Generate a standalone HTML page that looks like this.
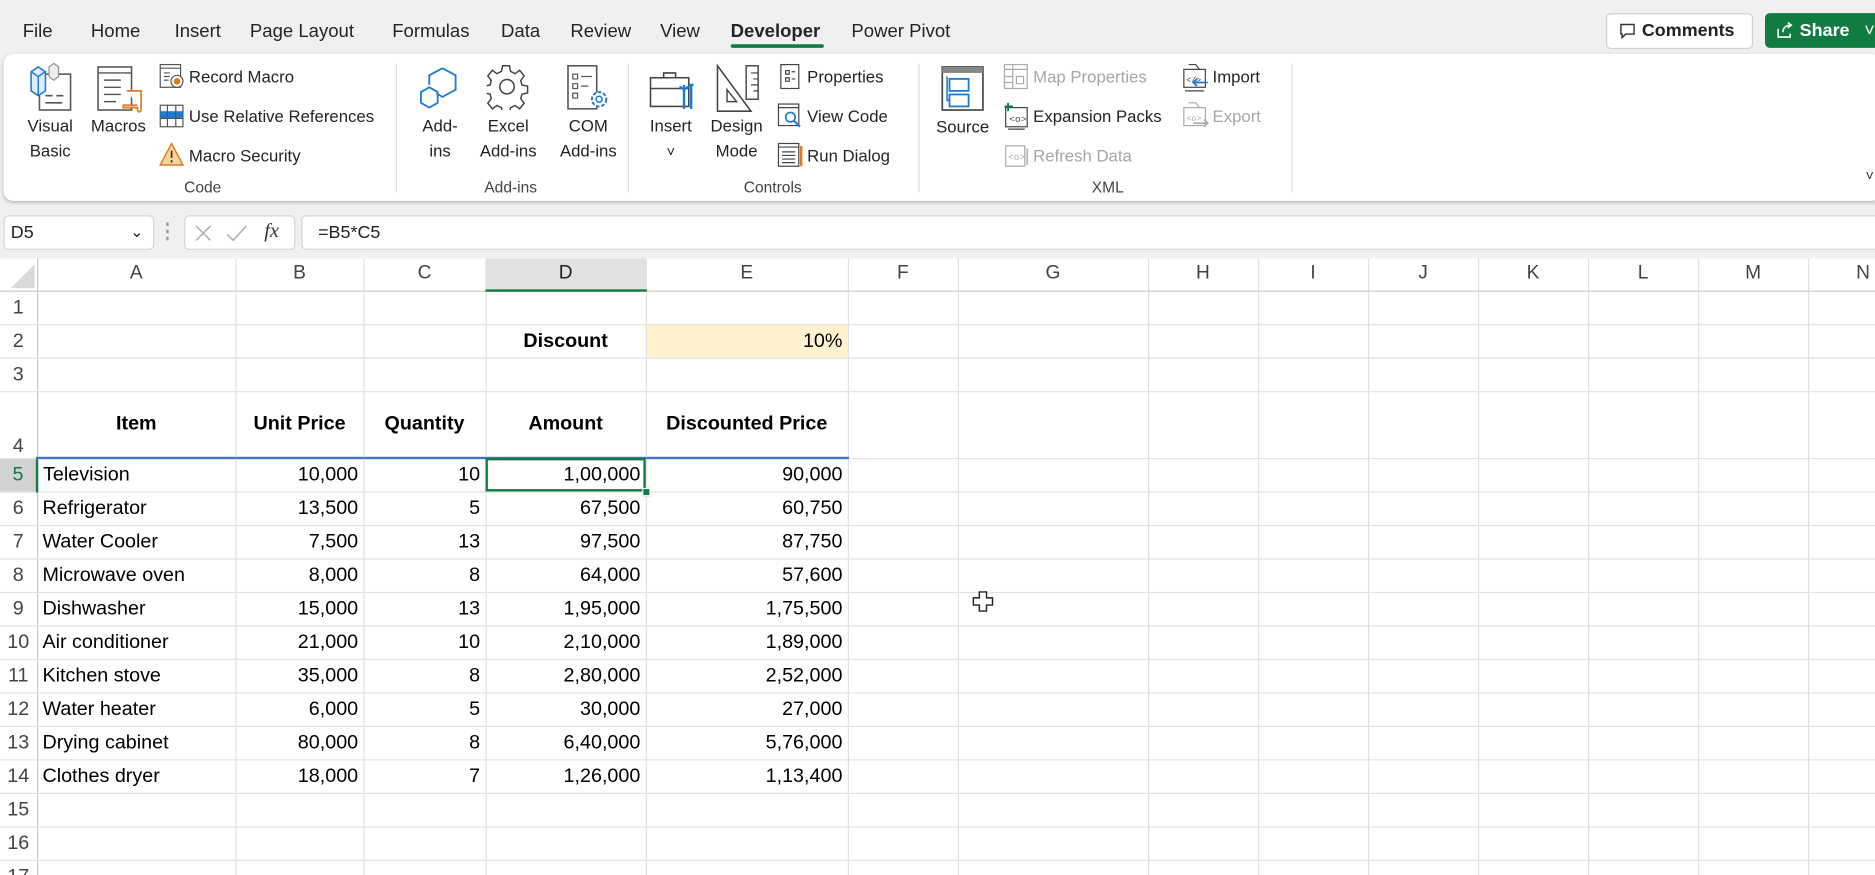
<!DOCTYPE html>
<html><head><meta charset="utf-8">
<style>
html,body{margin:0;padding:0;width:1875px;height:875px;overflow:hidden;background:#f0f0f0;}
#root{position:absolute;left:0;top:0;width:1568px;height:732px;transform:scale(1.19580);transform-origin:0 0;background:#f0f0f0;font-family:"Liberation Sans",sans-serif;color:#222;}
.abs{position:absolute;}
.tab{position:absolute;top:18px;font-size:15.5px;color:#242424;}
.rib{position:absolute;left:3px;top:45px;width:1570px;height:123px;background:#fff;border-radius:8px;box-shadow:0 1px 3px rgba(0,0,0,.25);}
.lbl{position:absolute;font-size:14px;color:#242424;text-align:center;line-height:21px;}
.sm{position:absolute;font-size:14px;color:#242424;white-space:nowrap;}
.gray{color:#a6a6a6;}
.glab{position:absolute;top:104px;font-size:13px;color:#444;}
.sep{position:absolute;top:8px;width:1px;height:108px;background:#dcdcdc;}
#grid{position:absolute;left:0;top:216px;width:1568px;height:516px;background:#fff;overflow:hidden;}
table{border-collapse:collapse;table-layout:fixed;width:1604px;font-family:"Liberation Sans",sans-serif;font-size:16.5px;}
td{border-right:1px solid #e1e1e1;border-bottom:1px solid #e1e1e1;padding:0 4px;white-space:nowrap;overflow:visible;color:#000;}
td.rh{color:#444;text-align:center;padding:0;font-size:16.5px;border-right:1px solid #c8c8c8;}
tr.ch td{color:#444;text-align:center;font-size:16px;border-bottom:1px solid #c8c8c8;}
.r{text-align:right;}
.c{text-align:center;}
.b{font-weight:bold;}
</style></head><body><div id="root">

<div class="tab" style="left:19px">File</div>
<div class="tab" style="left:76px">Home</div>
<div class="tab" style="left:146px">Insert</div>
<div class="tab" style="left:209px">Page Layout</div>
<div class="tab" style="left:328px">Formulas</div>
<div class="tab" style="left:419px">Data</div>
<div class="tab" style="left:477px">Review</div>
<div class="tab" style="left:552px">View</div>
<div class="tab" style="left:611px;font-weight:bold">Developer</div>
<div class="abs" style="left:611px;top:37px;width:78px;height:3px;background:#107c41;border-radius:2px"></div>
<div class="tab" style="left:712px">Power Pivot</div>

<div class="abs" style="left:1343px;top:11px;width:121px;height:28px;background:#fff;border:1px solid #d0d0d0;border-radius:4px;font-size:15px;font-weight:bold;line-height:28px;">
<svg class="abs" style="left:10px;top:7px" width="14" height="14" viewBox="0 0 14 14"><path d="M1.5 1.5h11v8h-7l-3 3v-3h-1z" fill="none" stroke="#333" stroke-width="1.2"/></svg>
<span style="position:absolute;left:29px">Comments</span></div>
<div class="abs" style="left:1476px;top:11px;width:100px;height:29px;background:#107c41;border-radius:4px;color:#fff;font-size:15px;font-weight:bold;line-height:29px;">
<svg class="abs" style="left:9px;top:7px" width="15" height="15" viewBox="0 0 15 15"><path d="M2 6v7h10v-3M6 9c0-4 3-6 7-6M10 0.8l3 2.2-3 2.4" fill="none" stroke="#fff" stroke-width="1.3"/></svg>
<span style="position:absolute;left:29px">Share</span><span style="position:absolute;left:83px;font-weight:normal">˅</span></div>

<div class="rib">
 <svg class="abs" style="left:20px;top:7px" width="40" height="42" viewBox="0 0 40 42"><rect x="10" y="10" width="26" height="30" fill="#fff" stroke="#555" stroke-width="1.3"/><path d="M15 28h6M24 28h6M15 34h14" stroke="#555" stroke-width="1.3"/><path d="M3 8l6-4 6 4v16l-6 4-6-4z" fill="#dceefb" stroke="#1e7ad0" stroke-width="1.3"/><path d="M3 8l6 4 6-4M9 12v16" stroke="#1e7ad0" stroke-width="1.2" fill="none"/><path d="M18 4l4-3 4 3v8l-4 3-4-3z" fill="#eee" stroke="#999" stroke-width="1.1"/></svg>
 <div class="lbl" style="left:12px;top:50px;width:54px">Visual<br>Basic</div>
 <svg class="abs" style="left:77px;top:9px" width="42" height="42" viewBox="0 0 42 42"><rect x="2" y="2" width="28" height="36" fill="#fff" stroke="#555" stroke-width="1.3"/><path d="M2 7h28M7 13h14M7 19h14M7 25h14M7 31h10" stroke="#555" stroke-width="1.2"/><path d="M26 22h12v16c0 2-3 2-3 0v-2H23v-2h12" fill="#fff" stroke="#e07b24" stroke-width="1.4"/></svg>
 <div class="lbl" style="left:68px;top:50px;width:56px">Macros</div>
 <svg class="abs" style="left:130px;top:8px" width="22" height="22" viewBox="0 0 22 22"><rect x="1" y="1" width="17" height="19" fill="#fff" stroke="#555"/><path d="M1 4h17M4 8h5M4 11h5M4 14h4" stroke="#555"/><circle cx="15" cy="15" r="5" fill="#fff" stroke="#555"/><circle cx="15" cy="15" r="2.8" fill="#e07b24"/></svg>
 <div class="sm" style="left:155px;top:11px">Record Macro</div>
 <svg class="abs" style="left:130px;top:42px" width="21" height="20" viewBox="0 0 21 20"><rect x="1" y="1" width="19" height="18" fill="#fff" stroke="#555"/><rect x="1" y="6" width="19" height="6" fill="#1e7ad0"/><path d="M7 1v18M14 1v18M1 12h19" stroke="#555"/></svg>
 <div class="sm" style="left:155px;top:44px">Use Relative References</div>
 <svg class="abs" style="left:130px;top:74px" width="21" height="20" viewBox="0 0 21 20"><path d="M10.5 1L20 19H1z" fill="#fbd49a" stroke="#e07b24" stroke-width="1.2"/><path d="M10.5 7v6M10.5 15v2" stroke="#333" stroke-width="1.4"/></svg>
 <div class="sm" style="left:155px;top:77px">Macro Security</div>
 <div class="glab" style="left:151px">Code</div>
 <div class="sep" style="left:328px"></div>

 <svg class="abs" style="left:345px;top:10px" width="40" height="38" viewBox="0 0 40 38"><path d="M22 2l11 6v12l-11 6-5-3" fill="none" stroke="#1e7ad0" stroke-width="1.5"/><path d="M22 2l-11 6v8" fill="none" stroke="#1e7ad0" stroke-width="1.5"/><path d="M11 18l7 4v9l-7 4-7-4v-9z" fill="none" stroke="#1e7ad0" stroke-width="1.5"/></svg>
 <div class="lbl" style="left:340px;top:50px;width:50px">Add-<br>ins</div>
 <svg class="abs" style="left:404px;top:9px" width="36" height="38" viewBox="0 0 36 38"><path d="M15 2h6l1 5 4 2 4-3 4 5-3 4 1 4 5 1v6l-5 1-1 4 3 4-4 5-4-3-4 2-1 5h-6l-1-5-4-2-4 3-4-5 3-4-1-4-5-1v-6l5-1 1-4-3-4 4-5 4 3 4-2z" transform="scale(0.95) translate(-1 -1)" fill="#fff" stroke="#444" stroke-width="1.3"/><circle cx="17" cy="18.5" r="6" fill="none" stroke="#444" stroke-width="1.3"/></svg>
 <div class="lbl" style="left:392px;top:50px;width:60px">Excel<br>Add-ins</div>
 <svg class="abs" style="left:470px;top:9px" width="38" height="40" viewBox="0 0 38 40"><rect x="2" y="1" width="24" height="36" fill="#fff" stroke="#555" stroke-width="1.3"/><path d="M6 8h4v4H6zM6 16h4v4H6zM6 24h4v4H6zM13 10h9M13 18h6" stroke="#555" fill="none"/><circle cx="28" cy="29" r="6" fill="#fff" stroke="#1e7ad0" stroke-width="1.6" stroke-dasharray="3 1.5"/><circle cx="28" cy="29" r="2.5" fill="none" stroke="#1e7ad0" stroke-width="1.3"/></svg>
 <div class="lbl" style="left:458px;top:50px;width:62px">COM<br>Add-ins</div>
 <div class="glab" style="left:402px">Add-ins</div>
 <div class="sep" style="left:522px"></div>

 <svg class="abs" style="left:539px;top:12px" width="44" height="36" viewBox="0 0 44 36"><rect x="2" y="8" width="32" height="24" fill="#fff" stroke="#444" stroke-width="1.3"/><path d="M13 8V4h10v4M2 17h32" stroke="#444" stroke-width="1.3" fill="none"/><path d="M30 14v6M27 15c0 3 6 3 6 0M30 20v14M36 14v20M34 14h4" stroke="#1e7ad0" stroke-width="2" fill="none"/></svg>
 <div class="lbl" style="left:532px;top:50px;width:52px">Insert<br><span style="font-size:12px">˅</span></div>
 <svg class="abs" style="left:595px;top:8px" width="40" height="42" viewBox="0 0 40 42"><path d="M2 40V2l28 38z" fill="#fff" stroke="#444" stroke-width="1.3"/><path d="M10 32V22l8 10z" fill="none" stroke="#444" stroke-width="1.2"/><rect x="26" y="2" width="10" height="28" fill="#fff" stroke="#444" stroke-width="1.2"/><path d="M30 8h6M32 13h4M30 18h6M32 23h4" stroke="#444"/></svg>
 <div class="lbl" style="left:586px;top:50px;width:54px">Design<br>Mode</div>
 <svg class="abs" style="left:649px;top:8px" width="18" height="22" viewBox="0 0 18 22"><rect x="1" y="1" width="15" height="20" fill="#fff" stroke="#444"/><path d="M5 6h3v3H5zM5 12h3v3H5zM10 7h3M10 13h3" stroke="#444" fill="none"/></svg>
 <div class="sm" style="left:672px;top:11px">Properties</div>
 <svg class="abs" style="left:647px;top:41px" width="22" height="22" viewBox="0 0 22 22"><rect x="1" y="1" width="17" height="18" fill="#fff" stroke="#444"/><path d="M1 4h17" stroke="#444"/><circle cx="11" cy="12" r="4" fill="none" stroke="#1e7ad0" stroke-width="1.4"/><path d="M14 15l5 5" stroke="#1e7ad0" stroke-width="1.8"/></svg>
 <div class="sm" style="left:672px;top:44px">View Code</div>
 <svg class="abs" style="left:647px;top:74px" width="22" height="22" viewBox="0 0 22 22"><rect x="1" y="1" width="17" height="19" fill="#fff" stroke="#444"/><path d="M1 4h17M4 8h11M4 11h11M4 14h11M4 17h11" stroke="#444"/><path d="M20 3v17" stroke="#e07b24" stroke-width="2"/></svg>
 <div class="sm" style="left:672px;top:77px">Run Dialog</div>
 <div class="glab" style="left:619px">Controls</div>
 <div class="sep" style="left:765px"></div>

 <svg class="abs" style="left:783px;top:9px" width="38" height="40" viewBox="0 0 38 40"><rect x="2" y="2" width="34" height="36" fill="#fff" stroke="#444" stroke-width="1.4"/><rect x="2" y="2" width="34" height="5" fill="#888"/><rect x="8" y="12" width="16" height="10" fill="#fff" stroke="#1e7ad0" stroke-width="1.5"/><rect x="8" y="25" width="16" height="10" fill="#fff" stroke="#1e7ad0" stroke-width="1.5"/><path d="M6 10v20h2" stroke="#1e7ad0" stroke-width="1.3" fill="none"/></svg>
 <div class="lbl" style="left:775px;top:51px;width:54px">Source</div>
 <svg class="abs" style="left:836px;top:8px" width="22" height="22" viewBox="0 0 22 22"><rect x="1" y="1" width="19" height="20" fill="#fff" stroke="#aaa"/><path d="M1 5h19M8 1v20M1 11h7M1 16h7M11 11h6v6h-6z" stroke="#aaa" fill="none"/></svg>
 <div class="sm gray" style="left:861px;top:11px">Map Properties</div>
 <svg class="abs" style="left:836px;top:40px" width="22" height="24" viewBox="0 0 22 24"><rect x="2" y="5" width="18" height="16" fill="#fff" stroke="#444"/><path d="M4 1v7M1 4h7" stroke="#107c41" stroke-width="1.5"/><text x="5" y="17" font-size="8" font-family="Liberation Mono" fill="#444">&lt;o&gt;</text><path d="M4 23h14" stroke="#444"/></svg>
 <div class="sm" style="left:861px;top:44px">Expansion Packs</div>
 <svg class="abs" style="left:836px;top:73px" width="22" height="24" viewBox="0 0 22 24"><rect x="2" y="4" width="16" height="17" fill="#fff" stroke="#aaa"/><text x="4" y="16" font-size="8" font-family="Liberation Mono" fill="#aaa">&lt;o&gt;</text><path d="M20 6v14" stroke="#bbb" stroke-width="1.5"/></svg>
 <div class="sm gray" style="left:861px;top:77px">Refresh Data</div>
 <svg class="abs" style="left:985px;top:8px" width="24" height="24" viewBox="0 0 24 24"><rect x="2" y="5" width="18" height="15" fill="#fff" stroke="#444"/><path d="M6 1h6l3 4" stroke="#444" fill="none"/><text x="4" y="16" font-size="7" font-family="Liberation Mono" fill="#444">&lt;/&gt;</text><path d="M22 16h-12M13 13l-3 3 3 3" stroke="#1e7ad0" stroke-width="1.5" fill="none"/><path d="M3 23h16" stroke="#444"/></svg>
 <div class="sm" style="left:1011px;top:11px">Import</div>
 <svg class="abs" style="left:985px;top:40px" width="24" height="24" viewBox="0 0 24 24"><rect x="2" y="5" width="18" height="15" fill="#fff" stroke="#aaa"/><path d="M6 1h6l3 4" stroke="#aaa" fill="none"/><text x="4" y="16" font-size="7" font-family="Liberation Mono" fill="#aaa">&lt;o&gt;</text><path d="M10 18h12M19 15l3 3-3 3" stroke="#aaa" stroke-width="1.3" fill="none"/></svg>
 <div class="sm gray" style="left:1011px;top:44px">Export</div>
 <div class="glab" style="left:910px">XML</div>
 <div class="sep" style="left:1077px"></div>
 <div class="abs" style="left:1557px;top:95px;font-size:12px;color:#333">˅</div>
</div>

<div class="abs" style="left:3px;top:180px;width:124px;height:27px;background:#fff;border:1px solid #d6d6d6;border-radius:4px;font-size:15px;line-height:27px;"><span style="position:absolute;left:5px">D5</span><span style="position:absolute;left:105px;top:-1px;font-size:13px">&#8964;</span></div>
<div class="abs" style="left:139px;top:186px;width:2px;height:3px;background:#999;box-shadow:0 6px 0 #999,0 12px 0 #999"></div>
<div class="abs" style="left:154px;top:180px;width:91px;height:27px;background:#fff;border:1px solid #d6d6d6;border-radius:4px;">
<svg class="abs" style="left:7px;top:6px" width="16" height="16" viewBox="0 0 16 16"><path d="M2 2l12 12M14 2L2 14" stroke="#aaa" stroke-width="1.2"/></svg>
<svg class="abs" style="left:34px;top:6px" width="18" height="16" viewBox="0 0 18 16"><path d="M1 9l5 5L17 2" stroke="#aaa" stroke-width="1.2" fill="none"/></svg>
<span class="abs" style="left:66px;top:2px;font-family:'Liberation Serif',serif;font-style:italic;font-size:17px;color:#333">fx</span></div>
<div class="abs" style="left:252px;top:180px;width:1320px;height:27px;background:#fff;border:1px solid #d6d6d6;border-radius:4px;font-size:15px;line-height:27px;"><span style="position:absolute;left:13px">=B5*C5</span></div>

<div id="grid">
<table>
<colgroup><col style="width:31px"><col style="width:166px"><col style="width:107px"><col style="width:102px"><col style="width:134px"><col style="width:169px"><col style="width:92px"><col style="width:159px"><col style="width:92px"><col style="width:92px"><col style="width:92px"><col style="width:92px"><col style="width:92px"><col style="width:92px"><col style="width:92px"></colgroup>
<tr class="ch" style="height:27px"><td class="rh" style="position:relative"><svg style="position:absolute;right:2px;bottom:2px" width="20" height="20"><path d="M20 0V20H0z" fill="#dadada"/></svg></td><td>A</td><td>B</td><td>C</td><td style="background:#e1e1e1;border-bottom:2px solid #107c41;color:#222">D</td><td>E</td><td>F</td><td>G</td><td>H</td><td>I</td><td>J</td><td>K</td><td>L</td><td>M</td><td>N</td></tr>
<tr style="height:28px"><td class="rh">1</td><td></td><td></td><td></td><td></td><td></td><td></td><td></td><td></td><td></td><td></td><td></td><td></td><td></td><td></td></tr>
<tr style="height:28px"><td class="rh">2</td><td></td><td></td><td></td><td class="c b">Discount</td><td class="r" style="background:#fff2cc">10%</td><td></td><td></td><td></td><td></td><td></td><td></td><td></td><td></td><td></td></tr>
<tr style="height:28px"><td class="rh">3</td><td></td><td></td><td></td><td></td><td></td><td></td><td></td><td></td><td></td><td></td><td></td><td></td><td></td><td></td></tr>
<tr style="height:56px"><td class="rh" style="vertical-align:bottom">4</td><td class="c b" style="border-bottom:2px solid #4472c4">Item</td><td class="c b" style="border-bottom:2px solid #4472c4">Unit Price</td><td class="c b" style="border-bottom:2px solid #4472c4">Quantity</td><td class="c b" style="border-bottom:2px solid #4472c4">Amount</td><td class="c b" style="border-bottom:2px solid #4472c4">Discounted Price</td><td></td><td></td><td></td><td></td><td></td><td></td><td></td><td></td><td></td></tr>
<tr style="height:28px"><td class="rh" style="background:#d2d2d2;color:#107c41;border-right:2px solid #107c41">5</td><td>Television</td><td class="r">10,000</td><td class="r">10</td><td class="r" style="outline:2px solid #107c41;outline-offset:-2px">1,00,000</td><td class="r">90,000</td><td></td><td></td><td></td><td></td><td></td><td></td><td></td><td></td><td></td></tr>
<tr style="height:28px"><td class="rh">6</td><td>Refrigerator</td><td class="r">13,500</td><td class="r">5</td><td class="r">67,500</td><td class="r">60,750</td><td></td><td></td><td></td><td></td><td></td><td></td><td></td><td></td><td></td></tr>
<tr style="height:28px"><td class="rh">7</td><td>Water Cooler</td><td class="r">7,500</td><td class="r">13</td><td class="r">97,500</td><td class="r">87,750</td><td></td><td></td><td></td><td></td><td></td><td></td><td></td><td></td><td></td></tr>
<tr style="height:28px"><td class="rh">8</td><td>Microwave oven</td><td class="r">8,000</td><td class="r">8</td><td class="r">64,000</td><td class="r">57,600</td><td></td><td></td><td></td><td></td><td></td><td></td><td></td><td></td><td></td></tr>
<tr style="height:28px"><td class="rh">9</td><td>Dishwasher</td><td class="r">15,000</td><td class="r">13</td><td class="r">1,95,000</td><td class="r">1,75,500</td><td></td><td></td><td></td><td></td><td></td><td></td><td></td><td></td><td></td></tr>
<tr style="height:28px"><td class="rh">10</td><td>Air conditioner</td><td class="r">21,000</td><td class="r">10</td><td class="r">2,10,000</td><td class="r">1,89,000</td><td></td><td></td><td></td><td></td><td></td><td></td><td></td><td></td><td></td></tr>
<tr style="height:28px"><td class="rh">11</td><td>Kitchen stove</td><td class="r">35,000</td><td class="r">8</td><td class="r">2,80,000</td><td class="r">2,52,000</td><td></td><td></td><td></td><td></td><td></td><td></td><td></td><td></td><td></td></tr>
<tr style="height:28px"><td class="rh">12</td><td>Water heater</td><td class="r">6,000</td><td class="r">5</td><td class="r">30,000</td><td class="r">27,000</td><td></td><td></td><td></td><td></td><td></td><td></td><td></td><td></td><td></td></tr>
<tr style="height:28px"><td class="rh">13</td><td>Drying cabinet</td><td class="r">80,000</td><td class="r">8</td><td class="r">6,40,000</td><td class="r">5,76,000</td><td></td><td></td><td></td><td></td><td></td><td></td><td></td><td></td><td></td></tr>
<tr style="height:28px"><td class="rh">14</td><td>Clothes dryer</td><td class="r">18,000</td><td class="r">7</td><td class="r">1,26,000</td><td class="r">1,13,400</td><td></td><td></td><td></td><td></td><td></td><td></td><td></td><td></td><td></td></tr>
<tr style="height:28px"><td class="rh">15</td><td></td><td></td><td></td><td></td><td></td><td></td><td></td><td></td><td></td><td></td><td></td><td></td><td></td><td></td></tr>
<tr style="height:28px"><td class="rh">16</td><td></td><td></td><td></td><td></td><td></td><td></td><td></td><td></td><td></td><td></td><td></td><td></td><td></td><td></td></tr>
<tr style="height:28px"><td class="rh">17</td><td></td><td></td><td></td><td></td><td></td><td></td><td></td><td></td><td></td><td></td><td></td><td></td><td></td><td></td></tr>
</table>
<div class="abs" style="left:537px;top:192px;width:5px;height:5px;background:#107c41;border:1px solid #fff"></div>
<svg class="abs" style="left:813px;top:278px" width="18" height="18" viewBox="0 0 18 18"><path d="M6 1h6v5h5v6h-5v5H6v-5H1V6h5z" fill="#fff" stroke="#222" stroke-width="1.2"/></svg>
</div>
</div></body></html>
